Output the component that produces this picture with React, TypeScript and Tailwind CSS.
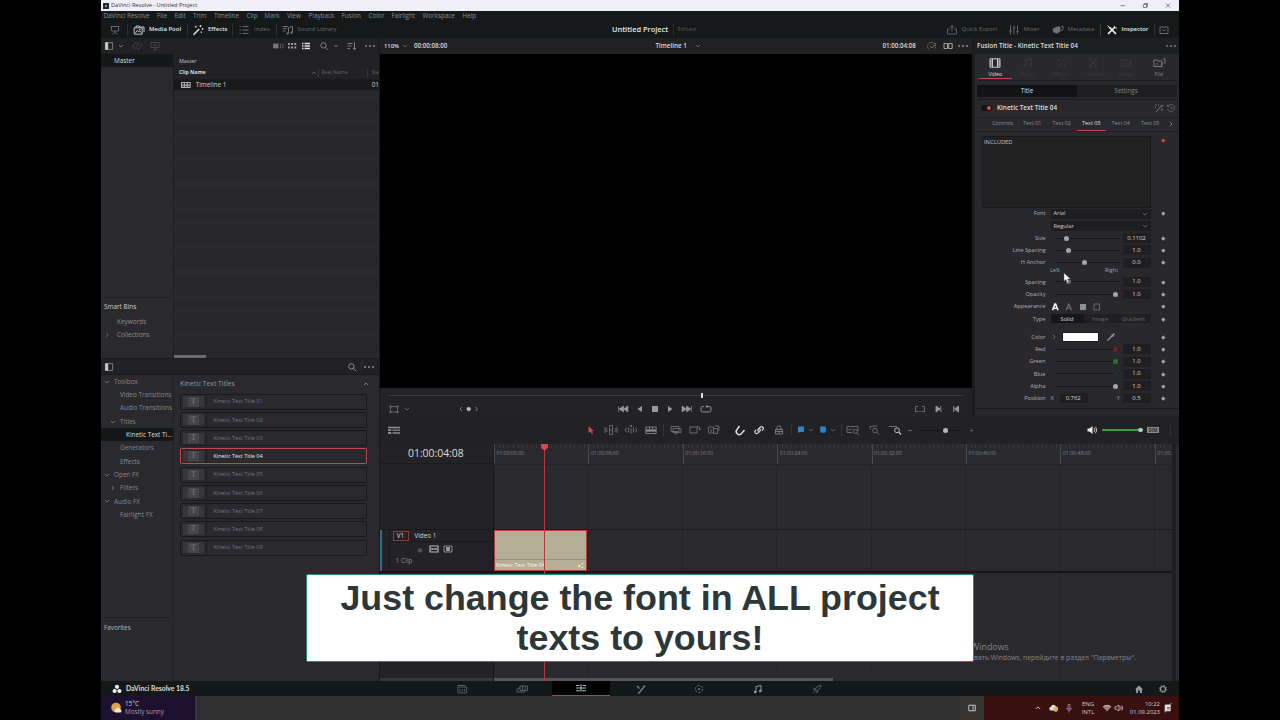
import React from "react";
import type { ReactNode } from "react";

type Kids = { children?: ReactNode; className?: string };

const Ic = ({ children, className = "" }: Kids) => (
  <svg
    viewBox="0 0 12 12"
    className={`h-[12px] w-[12px] shrink-0 overflow-visible ${className}`}
    fill="none"
    stroke="currentColor"
    strokeWidth="0.9"
  >
    {children}
  </svg>
);

const Chev = ({ className = "" }: Kids) => (
  <svg viewBox="0 0 6 6" className={`h-[6px] w-[6px] shrink-0 ${className}`} fill="none" stroke="currentColor" strokeWidth="0.8">
    <path d="M1 2l2 2 2-2" />
  </svg>
);

const Div = ({ className = "" }: Kids) => <div className={`h-[12px] w-px shrink-0 bg-[#2c2e31] ${className}`} />;

const Dots = ({ className = "" }: Kids) => (
  <Ic className={className}>
    <g fill="currentColor" stroke="none">
      <circle cx="2" cy="6" r="0.9" />
      <circle cx="6" cy="6" r="0.9" />
      <circle cx="10" cy="6" r="0.9" />
    </g>
  </Ic>
);

const PanelIcon = ({ className = "" }: Kids) => (
  <Ic className={className}>
    <path d="M2.4 2.6h7.2v6.8H2.4z" opacity="0.6" />
    <path d="M2.2 2.4h3v7.2h-3z" fill="currentColor" stroke="none" />
  </Ic>
);

const SearchIcon = ({ className = "" }: Kids) => (
  <Ic className={className}>
    <circle cx="5.4" cy="5.4" r="2.7" />
    <path d="M7.4 7.4L10 10" />
  </Ic>
);

const menus: [string, string][] = [
  ["DaVinci Resolve", "w-[53.5px]"],
  ["File", "w-[17.5px]"],
  ["Edit", "w-[18.5px]"],
  ["Trim", "w-[21px]"],
  ["Timeline", "w-[32.5px]"],
  ["Clip", "w-[18px]"],
  ["Mark", "w-[22.5px]"],
  ["View", "w-[21.5px]"],
  ["Playback", "w-[33px]"],
  ["Fusion", "w-[27px]"],
  ["Color", "w-[23px]"],
  ["Fairlight", "w-[31px]"],
  ["Workspace", "w-[40px]"],
  ["Help", "w-[20px]"],
];

function TitleBar() {
  return (
    <div className="flex h-[11px] shrink-0 items-center bg-[#f0eef7] text-[#303038]">
      <div className="ml-[2px] flex h-[6px] w-[6px] items-center justify-center bg-[#1b2b33]">
        <div className="h-[2px] w-[2px] rounded-full bg-[#9fb4bd]" />
      </div>
      <div className="ml-[2px] grow text-[5.6px]">DaVinci Resolve - Untitled Project</div>
      <svg viewBox="0 0 60 11" className="h-[11px] w-[60px]" fill="none" stroke="#55555c" strokeWidth="0.7">
        <path d="M1.500 5.700h4.500M24.500 4.500h3v3h-3zM25.500 4.300v-.8h3v3h-.8M47 3.500l4 4M51 3.500l-4 4" />
      </svg>
    </div>
  );
}

function MenuBar() {
  return (
    <div className="flex h-[10px] shrink-0 items-center bg-[#15191a] pl-[2.500px] text-[6.3px] text-[#8b8e90]">
      {menus.map(([t, w]) => (
        <div key={t} className={`${w} shrink-0`}>{t}</div>
      ))}
    </div>
  );
}

function MainToolbar() {
  return (
    <div className="flex h-[17px] shrink-0 items-center bg-[#15191a] text-[6px] text-[#696c6f]">
      <Ic className="ml-[7.5px]">
        <path d="M1.500 2.500h9M2.500 2.500v4.500h7V2.500M6 7v1.500M3.500 10.200L6 8.300l2.500 1.900" />
      </Ic>
      <Div className="ml-[6.500px]" />
      <Ic className="ml-[5px] text-[#d4d5d6]">
        <path d="M3 3.500V2h3l.8 1H11v5M1.200 3.800h8v6.400h-8zM2.500 8.800l1.800-2.400 1.500 1.500 1-.9 1.500 1.800" />
        <circle cx="6.800" cy="5.600" r=".5" />
      </Ic>
      <div className="ml-[4px] w-[38px] font-semibold text-[#e4e4e5]">Media Pool</div>
      <Div />
      <Ic className="ml-[4px] text-[#e4e4e5]">
        <path d="M1.500 10.800L7.200 5" strokeWidth="1.500" />
        <path d="M8.500 1v2.200M7.400 2.100h2.200M10.500 4v1.800M9.600 4.900h1.800M3.800 1.800v1.800M2.900 2.700h1.800M9.300 7.500v1.400M8.600 8.200H10" strokeWidth=".8" />
      </Ic>
      <div className="ml-[4px] w-[24px] font-semibold text-[#e4e4e5]">Effects</div>
      <Div />
      <Ic className="ml-[5px]">
        <path d="M4.500 2.500h6M4.500 6h6M4.500 9.500h6M1.500 2.500h1.300M1.500 6h1.300M1.500 9.500h1.300" strokeWidth="1.100" />
      </Ic>
      <div className="ml-[4px] w-[22px] tracking-[0.1px]">Index</div>
      <Div />
      <Ic className="ml-[5px] text-[#7a7c7e]">
        <path d="M.8 2.500h5M.8 4.800h4M.8 7.100h2.500M6.500 9.500v-6l4-1v6" />
        <circle cx="5.500" cy="9.500" r="1.100" fill="currentColor" stroke="none" />
        <circle cx="9.600" cy="8.700" r="1.100" fill="currentColor" stroke="none" />
      </Ic>
      <div className="ml-[3.500px] w-[314.500px]">Sound Library</div>
      <div className="w-[60.500px] text-[7.400px] font-semibold text-[#e8e8e9]">Untitled Project</div>
      <Div className="h-[8px]" />
      <div className="ml-[4px] grow text-[6px] tracking-[0.150px] text-[#55585b]">Edited</div>
      <Ic>
        <path d="M3.500 5H1.500v5h9V5h-2M6 7.500V1.800M4 3.500l2-2 2 2" />
      </Ic>
      <div className="ml-[3.500px] w-[47px]">Quick Export</div>
      <Ic className="-ml-[1px]">
        <path d="M2.500 1.500v9M6 1.500v9M9.500 1.500v9M1.300 7h2.400M4.800 4h2.400M8.300 7.500h2.400" />
      </Ic>
      <div className="ml-[4px] w-[28px]">Mixer</div>
      <Ic className="text-[#707376]">
        <path d="M1 5l4-2h3v4L5 9.200 1.500 8z" fill="currentColor" />
        <path d="M9 2.500l2-.5v3.500L9 7" />
      </Ic>
      <div className="ml-[4px] w-[32px]">Metadata</div>
      <Div className="bg-[#3a3d40]" />
      <Ic className="ml-[5px] text-[#efefef]">
        <path d="M2 10l7-7M3.200 3.200L10 10" strokeWidth="1.700" />
        <path d="M1.500 1.500l2 2M8 1.800l1 2 2 .3" />
      </Ic>
      <div className="ml-[4px] w-[32px] text-[5.900px] font-semibold text-[#e8e8e9]">Inspector</div>
      <Div />
      <Ic className="mr-[9px] ml-[3.500px] text-[#6d7073]">
        <path d="M2 3h8v6.500H2zM4.300 5.300L6 7l1.700-1.700" />
      </Ic>
    </div>
  );
}

function MediaPool() {
  return (
    <div className="flex h-[304px] shrink-0 text-[6.400px]">
      <div className="flex w-[73px] shrink-0 flex-col border-r border-[#1d1d20] bg-[#29292e]">
        <div className="flex h-[13px] items-center bg-[#151819] pl-[13px] text-[#dcdcdc]">Master</div>
        <div className="mx-[3px] h-[231px] border-b border-[#1f1f22]" />
        <div className="flex h-[17px] items-center pl-[3px] text-[#d0d0d2]">Smart Bins</div>
        <div className="flex h-[13.500px] items-center pl-[16px] text-[#8e8e93]">Keywords</div>
        <div className="flex h-[13px] items-center pl-[3px] text-[#8e8e93]">
          <Chev className="-rotate-90 text-[#6a6a6f]" />
          <span className="ml-[7px]">Collections</span>
        </div>
      </div>
      <div className="flex grow flex-col overflow-hidden bg-[#27272c]">
        <div className="flex h-[13.500px] shrink-0 items-center bg-[#222226] pl-[5px] text-[5.400px] text-[#c4c4c6]">Master</div>
        <div className="flex h-[12px] shrink-0 items-center border-b border-[#1c1c1f] bg-[#222226] pl-[5px] text-[5.200px] text-[#66666b]">
          <span className="w-[132px] font-bold text-[#dededf]">Clip Name</span>
          <Chev className="rotate-180" />
          <span className="ml-[1px] w-[50px] border-l border-[#3a3a3e] pl-[3px]">Reel Name</span>
          <span className="border-l border-[#3a3a3e] pl-[3px]">Sta</span>
        </div>
        <div className="flex h-[10px] shrink-0 items-center bg-[#19191c] text-[#cfcfd0]">
          <svg viewBox="0 0 10 6" className="ml-[7px] h-[6px] w-[10px]" fill="#b0b0b2">
            <path d="M0 0h10v6H0zM1 1v1.500h2V1zM4 1v1.500h2V1zM7 1v1.500h2V1zM1 3.800v1h2v-1zM4 3.800v1h2v-1zM7 3.800v1h2v-1z" fillRule="evenodd" />
          </svg>
          <span className="ml-[5px] w-[176px] shrink-0">Timeline 1</span>
          <span>01</span>
        </div>
        <div className="mr-[2px] grow bg-[repeating-linear-gradient(180deg,#28282d_0_11px,#26262b_11px_22px)]" />
        <div className="h-[3px] w-[32px] shrink-0 bg-[#6b6b70]" />
      </div>
    </div>
  );
}

const tree: { t: string; pad: string; open?: boolean; shut?: boolean; sel?: boolean }[] = [
  { t: "Toolbox", pad: "pl-[3px]", open: true },
  { t: "Video Transitions", pad: "pl-[19px]" },
  { t: "Audio Transitions", pad: "pl-[19px]" },
  { t: "Titles", pad: "pl-[9px]", open: true },
  { t: "Kinetic Text Ti...", pad: "pl-[25px]", sel: true },
  { t: "Generators", pad: "pl-[19px]" },
  { t: "Effects", pad: "pl-[19px]" },
  { t: "Open FX", pad: "pl-[3px]", open: true },
  { t: "Filters", pad: "pl-[9px]", shut: true },
  { t: "Audio FX", pad: "pl-[3px]", open: true },
  { t: "Fairlight FX", pad: "pl-[19px]" },
];

const titles = ["01", "02", "03", "04", "05", "06", "07", "08", "09"];

function EffectsPanel() {
  return (
    <>
      <div className="flex h-[17px] shrink-0 items-center border-y border-[#1a1a1d] bg-[#212125] text-[#9b9b9e]">
        <PanelIcon className="ml-[2px] text-[#c8c8ca]" />
        <Div className="ml-[3px] bg-[#1a1a1d]" />
        <SearchIcon className="ml-[226.500px]" />
        <Div className="ml-[3.500px] bg-[#1a1a1d]" />
        <Dots className="ml-[1px]" />
      </div>
      <div className="flex min-h-0 grow">
        <div className="flex w-[73px] shrink-0 flex-col border-r border-[#222226] text-[6.400px] text-[#88888d]">
          {tree.map((r) => (
            <div
              key={r.t}
              className={`flex h-[13.300px] shrink-0 items-center overflow-hidden ${r.pad} ${r.sel ? "bg-[#141718] text-[#dedede]" : ""}`}
            >
              {r.open && <Chev className="mr-[4px]" />}
              {r.shut && <Chev className="mr-[4px] -rotate-90" />}
              {r.t}
            </div>
          ))}
          <div className="mx-[3px] mt-auto border-t border-[#202024]" />
          <div className="flex h-[63px] pt-[5px] pl-[3px] text-[6.300px] text-[#b9b9bc]">Favorites</div>
        </div>
        <div className="flex grow flex-col">
          <div className="flex h-[18.500px] items-center justify-between pr-[10px] pl-[6px] text-[6.750px] text-[#97979b]">
            Kinetic Text Titles
            <Chev className="rotate-180" />
          </div>
          <div className="flex flex-col gap-[2.250px] pl-[6px]">
            {titles.map((n) => (
              <div
                key={n}
                className={`flex h-[16px] w-[187px] items-center rounded-[1.500px] border text-[5.450px] ${
                  n === "04" ? "border-[#c1474a] text-[#ececec]" : "border-[#19191c] text-[#77777c]"
                }`}
              >
                <div className="ml-[2px] flex h-[11px] w-[21px] items-center justify-center bg-[#36363b]">
                  <div className="flex h-[10px] w-[11px] items-center justify-center bg-[#45454a] font-['Liberation_Serif'] text-[8px] leading-none text-[#7b7b80]">T</div>
                </div>
                <div className="ml-[2px] h-full w-px bg-[#1c1c1f]" />
                <span className="ml-[6.500px]">Kinetic Text Title {n}</span>
              </div>
            ))}
          </div>
        </div>
      </div>
    </>
  );
}

function LeftColumn() {
  return (
    <div className="flex w-[279px] shrink-0 flex-col border-r border-[#18181a] bg-[#29292e]">
      <div className="flex h-[16px] shrink-0 items-center bg-[#212124] text-[#8b8b8e]">
        <PanelIcon className="ml-[2px] text-[#c8c8ca]" />
        <Chev className="ml-[2.500px]" />
        <Ic className="ml-[7.500px] text-[#4b4b4f]">
          <path d="M2 8.500C1 5 4 2 6.500 3M10 3.500c1 3.500-2 6.500-4.500 5.500M3.500 9.500l5-7" />
        </Ic>
        <Ic className="ml-[6px] text-[#4b4b4f]">
          <path d="M2 2.500h8v5H2zM6 7.500v3M4 5h4M4.500 9L6 10.500 7.500 9" />
        </Ic>
        <Ic className="ml-[111px] text-[#77777b]">
          <path d="M1.500 4h4.500v4H1.500z" fill="currentColor" />
          <path d="M7.500 4h1v4h-1M10 4h1v4h-1" strokeWidth=".6" />
        </Ic>
        <Ic className="ml-[2px] text-[#a5a5a8]">
          <path d="M2 4h1.800M5.200 4H7M8.400 4h1.800M2 7.500h1.800M5.200 7.500H7M8.400 7.500h1.800" strokeWidth="1.800" />
        </Ic>
        <Ic className="ml-[2px] text-[#e0e0e1]">
          <path d="M2 3.500h1.500M4.500 3.500H10M2 6h1.500M4.500 6H10M2 8.500h1.500M4.500 8.500H10" strokeWidth="1.300" />
        </Ic>
        <SearchIcon className="ml-[6px]" />
        <Chev className="ml-[3px]" />
        <Ic className="ml-[6.500px]">
          <path d="M1.500 3.500h5M1.500 6h3.800M1.500 8.500h2.600M8.500 2.500v7M7 8l1.500 1.500L10 8" />
        </Ic>
        <Dots className="ml-[6px]" />
      </div>
      <MediaPool />
      <EffectsPanel />
    </div>
  );
}

function Viewer() {
  return (
    <div className="flex grow flex-col bg-[#232327]">
      <div className="flex h-[16px] shrink-0 items-center bg-[#212124] text-[6.200px] font-semibold text-[#d9d9da]">
        <div className="ml-[4px] w-[18px] text-[5.800px]">110%</div>
        <Chev className="text-[#77777a]" />
        <div className="ml-[6px] w-[241.500px]">00:00:08:00</div>
        <div className="w-[39px] text-[6.300px]">Timeline 1</div>
        <Chev className="text-[#77777a]" />
        <div className="ml-[182px] w-[43.500px]">01:00:04:08</div>
        <Ic className="text-[#a08550]">
          <path d="M3 9.500a4 4 0 1 1 6-1" strokeDasharray="1.500 .8" />
          <path d="M4 6l2 2 4-5" stroke="#77777a" />
        </Ic>
        <Ic className="ml-[4px] text-[#b4b4b6]">
          <path d="M2 3.500h3.500v5H2zM6.700 3.500h3.500v5H6.700z" />
        </Ic>
        <Dots className="ml-[3px] text-[#97979a]" />
      </div>
      <div className="h-[333.500px] shrink-0 bg-black" />
      <div className="flex h-[16px] shrink-0 items-center px-[8px]">
        <div className="h-px w-[312.500px] bg-[#3a3a3d]" />
        <div className="h-[5px] w-[2px] bg-[#dedede]" />
        <div className="h-px grow bg-[#3a3a3d]" />
      </div>
      <div className="flex h-[11px] shrink-0 items-center text-[#98989b]">
        <Ic className="ml-[8px] text-[#68686c]">
          <path d="M2.500 3.500h7v5.500h-7z" />
          <path d="M1.500 2.500h2v2h-2zM8.500 2.500h2v2h-2zM1.500 8h2v2h-2zM8.500 8h2v2h-2z" fill="currentColor" stroke="none" />
        </Ic>
        <Chev className="ml-[4px] text-[#77777a]" />
        <svg viewBox="0 0 19 12" className="ml-[49px] h-[12px] w-[19px]" fill="none" stroke="currentColor" strokeWidth=".8">
          <path d="M3 4L1 6l2 2M16.500 4l2 2-2 2" />
          <circle cx="9.700" cy="6" r="2.100" fill="#bcbcbe" stroke="none" />
        </svg>
        <Ic className="ml-[139px]">
          <path d="M1.500 3v6M6.500 3v6L2 6zM11 3v6L6.500 6z" fill="currentColor" strokeWidth=".6" />
        </Ic>
        <Ic className="ml-[5px]">
          <path d="M8 3v6L3.500 6z" fill="currentColor" stroke="none" />
        </Ic>
        <Ic className="ml-[3px]">
          <path d="M3 3h6v6H3z" fill="currentColor" stroke="none" />
        </Ic>
        <Ic className="ml-[3px]">
          <path d="M4 3v6l4.500-3z" fill="currentColor" stroke="none" />
        </Ic>
        <Ic className="ml-[4.500px]">
          <path d="M10.500 3v6M5.500 3v6L10 6zM1 3v6l4.500-3z" fill="currentColor" strokeWidth=".6" />
        </Ic>
        <Ic className="ml-[7px]">
          <path d="M4 3.500H2.500a1.500 1.500 0 0 0-1.500 1.500v2a2 2 0 0 0 2 2h6a2 2 0 0 0 2-2V5a1.500 1.500 0 0 0-1.500-1.500H6M7.500 2L6 3.500 7.500 5" />
        </Ic>
        <Ic className="ml-[202.500px] text-[#77777a]">
          <path d="M4 3.500H1.500V8.500H4M8 3.500h2.500V8.500H8M4.500 8.500h1M6.500 8.500h1" />
        </Ic>
        <Ic className="ml-[6px]">
          <path d="M4 3v6l4-3zM8.800 3v6" fill="currentColor" />
        </Ic>
        <Ic className="ml-[6px]">
          <path d="M8.500 3v6l-4-3zM3.700 3v6" fill="currentColor" />
        </Ic>
      </div>
      <div className="grow" />
    </div>
  );
}

const Diamond = ({ className = "bg-[#a5a5a8]" }: { className?: string }) => (
  <div className={`h-[2.600px] w-[2.600px] shrink-0 rotate-45 ${className}`} />
);

const Val = ({ children }: Kids) => (
  <div className="flex h-[10px] w-[28px] items-center justify-center bg-[#1f1f22] pr-px text-[5.900px] text-[#d6d6d7]">{children}</div>
);

function Row({ label, children, h = "h-[12.250px]", noKey }: { label: string; children?: ReactNode; h?: string; noKey?: boolean }) {
  return (
    <div className={`flex ${h} shrink-0 items-center`}>
      <div className="w-[70.500px] shrink-0 text-right text-[5.700px] text-[#b0b0b4]">{label}</div>
      <div className="ml-[5px] flex w-[100.500px] shrink-0 items-center justify-between">{children}</div>
      {!noKey && (
        <div className="ml-[10.500px]">
          <Diamond />
        </div>
      )}
    </div>
  );
}

const Slider = ({ left, knob }: { left: string; knob: string }) => (
  <div className="ml-[4px] flex w-[65px] items-center">
    <div className={`h-px shrink-0 bg-[#17171a] ${left}`} />
    <div className={`h-[5px] w-[5px] shrink-0 rounded-full ${knob}`} />
    <div className="h-px grow bg-[#17171a]" />
  </div>
);

const Drop = ({ children }: Kids) => (
  <div className="flex h-[10px] w-full items-center justify-between bg-[#1e1e21] px-[3px] text-[5.700px] text-[#cdcdcf]">
    {children}
    <Chev className="text-[#77777a]" />
  </div>
);

const tabs: { t: string; on?: boolean; dim?: boolean; d: ReactNode }[] = [
  { t: "Video", on: true, d: <path d="M1 1.800h10v8.400H1zM3.500 1.800v8.400M8.500 1.800v8.400M1 4h2M1 6h2M1 8h2M9 4h2M9 6h2M9 8h2" /> },
  { t: "Audio", dim: true, d: <path d="M4 9.500V3l5.500-1v6.500M4 9.500a1.200 1.200 0 1 1-.1-1M9.500 8.500a1.200 1.200 0 1 1-.1-1" /> },
  { t: "Effects", dim: true, d: <path d="M2 10.500L7.500 5M9 2v2M8 3h2M4 2v2M3 3h2M9.500 7v2" /> },
  { t: "Transition", dim: true, d: <path d="M2 2h8L2 10h8z" /> },
  { t: "Image", dim: true, d: <path d="M1.500 3h9v6.500h-9zM3 8l2-2.500 2 2 1-1 1.500 1.500" /> },
  { t: "File", d: <path d="M1 3h3l1 1h4v5.500H1zM9.500 2H12v5M3 7h2M8 8.500l1.500-3" /> },
];

function Inspector() {
  return (
    <div className="flex w-[207px] shrink-0 flex-col border-l-[3px] border-[#1b1b1d] bg-[#28282d]">
      <div className="flex h-[16px] shrink-0 items-center justify-between bg-[#1d2022] pr-[2px] pl-[2px] text-[6.400px] font-semibold text-[#dedede]">
        Fusion Title - Kinetic Text Title 04
        <Dots className="text-[#85858a]" />
      </div>
      <div className="mx-[4px] grid h-[26.500px] shrink-0 grid-cols-6 border-b border-[#1c1c1f]">
        {tabs.map((t) => (
          <div
            key={t.t}
            className={`flex h-[25px] flex-col items-center border-b pt-[3px] text-[5.300px] leading-[10px] ${
              t.on ? "border-[#c34a4c] text-[#dcdcdc]" : t.dim ? "border-transparent text-[#3a3a3f]" : "border-transparent text-[#838388]"
            }`}
          >
            <Ic>{t.d}</Ic>
            {t.t}
          </div>
        ))}
      </div>
      <div className="mx-[2px] mt-[4px] grid h-[12px] shrink-0 grid-cols-2 rounded-[2px] bg-[#1e1e21] text-[6.300px]">
        <div className="flex items-center justify-center bg-[#131315] text-[#dedede]">Title</div>
        <div className="flex items-center justify-center pr-[2px] text-[#85858a]">Settings</div>
      </div>
      <div className="mx-[2px] mt-[2.500px] flex h-[16px] shrink-0 items-center border-t border-[#1c1c1f]">
        <div className="ml-[4px] flex h-[6px] w-[11px] items-center justify-end rounded-full bg-[#1a1416] pr-[1px]">
          <div className="h-[4px] w-[4px] rounded-full bg-[#d8484c]" />
        </div>
        <div className="ml-[5px] grow text-[6.400px] font-semibold text-[#dedede]">Kinetic Text Title 04</div>
        <Ic className="text-[#808085]">
          <path d="M3 10l6-7M9 6v3M2 3h1.500M5 3h1M2 5.500h1M8.500 5l1.500-2" />
        </Ic>
        <Ic className="text-[#606065]">
          <path d="M3 4a3.500 3.500 0 1 1-.5 3M2.500 2.500V4.500h2M6 4.500V6.500H7.500" />
        </Ic>
      </div>
      <div className="mt-[1.500px] ml-[2px] flex h-[15px] shrink-0 items-center border-y border-[#1e1e21] pl-[11px] text-[5.400px] text-[#909095]">
        {["Controls", "Text 01", "Text 02", "Text 03", "Text 04", "Text 05"].map((t) => (
          <div
            key={t}
            className={`flex h-[14px] w-[29.500px] shrink-0 items-center justify-center border-b ${
              t === "Text 03" ? "border-[#c34a4c] text-[#e0e0e0]" : "border-transparent"
            }`}
          >
            {t}
          </div>
        ))}
        <Chev className="ml-[3px] -rotate-90" />
      </div>
      <div className="mt-[4px] flex h-[72px] shrink-0 pl-[7px]">
        <div className="w-[169px] border border-[#19191c] bg-[#212122] px-[1px] pt-px text-[5.800px] leading-[8px] text-[#c2c2c4]">INCLUDED</div>
        <div className="mt-[3.500px] ml-[10.500px]">
          <Diamond className="bg-[#d2454a]" />
        </div>
      </div>
      <Row label="Font"><Drop>Arial</Drop></Row>
      <Row label="" noKey><Drop>Regular</Drop></Row>
      <Row label="Size"><Slider left="w-[9px]" knob="bg-[#a5a5a8]" /><Val>0.1102</Val></Row>
      <Row label="Line Spacing"><Slider left="w-[11px]" knob="bg-[#a5a5a8]" /><Val>1.0</Val></Row>
      <Row label="H Anchor"><Slider left="w-[27px]" knob="bg-[#a5a5a8]" /><Val>0.0</Val></Row>
      <div className="flex h-[7px] shrink-0 items-start pl-[75px] text-[5.500px] leading-[3px] text-[#a5a5a9]">
        <span className="w-[55px]">Left</span>
        <span>Right</span>
      </div>
      <Row label="Spacing"><Slider left="w-[11px]" knob="bg-[#6a6a6e]" /><Val>1.0</Val></Row>
      <Row label="Opacity"><Slider left="w-[58px]" knob="bg-[#a5a5a8]" /><Val>1.0</Val></Row>
      <Row label="Appearance" h="h-[12.500px]">
        <svg viewBox="0 0 54 10" className="h-[10px] w-[54px]" fill="none">
          <path d="M1.500 8.200L3.900 2h.7L7 8.200M2.300 6.200h3.900" stroke="#f2f2f2" strokeWidth="1.600" />
          <path d="M15 8.200L17.500 2.200h.6L20.500 8.200M16.300 6.200h3" stroke="#66666a" strokeWidth="1.200" />
          <path d="M29 2h6v6h-6z" fill="#8f8f93" />
          <path d="M43 2h5.500v6H43z" stroke="#6f6f73" strokeWidth=".9" />
        </svg>
      </Row>
      <Row label="Type">
        <div className="flex h-[9px] w-full items-center rounded-[1px] bg-[#202023] text-[5.700px] text-[#67676b]">
          <div className="flex h-full w-[33px] items-center justify-center bg-[#171719] text-[#dedede]">Solid</div>
          <div className="w-[33px] text-center">Image</div>
          <div className="w-[34px] text-center">Gradient</div>
        </div>
      </Row>
      <div className="h-[6px] shrink-0" />
      <Row label="Color">
        <div className="flex items-center">
          <Chev className="-rotate-90 text-[#77777a]" />
          <div className="ml-[5.500px] h-[9.500px] w-[36.500px] border border-[#1a1a1c] bg-white" />
          <Ic className="ml-[6px] text-[#9a9a9d]">
            <path d="M2.500 9.500l4.500-4.500M6.500 3.500l2 2M7.500 4.500l2-2" strokeWidth="1.300" />
          </Ic>
        </div>
      </Row>
      <Row label="Red"><Slider left="w-[58px]" knob="bg-[#7a1c1d]" /><Val>1.0</Val></Row>
      <Row label="Green"><Slider left="w-[58px]" knob="bg-[#1f7a2b]" /><Val>1.0</Val></Row>
      <Row label="Blue"><Slider left="w-[58px]" knob="bg-[#1d2c44]" /><Val>1.0</Val></Row>
      <Row label="Alpha"><Slider left="w-[58px]" knob="bg-[#a5a5a8]" /><Val>1.0</Val></Row>
      <Row label="Position">
        <span className="w-[6px] text-[5.500px] text-[#a5a5a9]">X</span>
        <Val>0.762</Val>
        <span className="ml-[26px] text-[5.500px] text-[#a5a5a9]">Y</span>
        <Val>0.5</Val>
      </Row>
      <div className="mt-[3px] h-[12px] border-t border-[#1c1c1f]" />
    </div>
  );
}

function TimelineToolbar() {
  return (
    <div className="flex h-[28px] shrink-0 items-center bg-[#222226] text-[#707074]">
      <Ic className="ml-[8px] text-[#8b8b8e]">
        <path d="M0 3.500h12M4.500 6.200H12M4.500 9H12" strokeWidth="1.300" />
        <path d="M0 6.200h3.300M0 9h3.300" strokeWidth="1.800" />
      </Ic>
      <Ic className="ml-[184.500px] text-[#d4453f]">
        <path d="M3.500 2l5.500 5.200H6.800l1.200 2.600-1.200.5-1.200-2.600L3.500 9z" fill="currentColor" stroke="none" />
      </Ic>
      <Ic className="ml-[8.500px]">
        <path d="M4.500 1.500h3v9h-3zM4.500 6h3M2.500 4L.8 6l1.700 2M9.500 4l1.700 2-1.700 2M0 3v6M12 3v6" />
      </Ic>
      <Ic className="ml-[8px]">
        <path d="M6 4v6M5 1.500h2L6 3zM3.500 3.500v5M8.500 3.500v5M1.500 3.500L.2 6l1.300 2.500M10.500 3.500L11.800 6l-1.300 2.500" />
      </Ic>
      <Ic className="ml-[7.500px] text-[#85858a]">
        <path d="M.8 3h10.400v6.500H.8z" />
        <path d="M1 6.500h10" strokeWidth="2.400" />
        <path d="M4.500 3v2M7.500 3v2" />
      </Ic>
      <Div className="ml-[6.500px] bg-[#343438]" />
      <Ic className="ml-[5.500px]">
        <path d="M1 2.500h8v5H1zM3 4.500h8v4H3zM5 9l1 1.500L7.500 9" />
      </Ic>
      <Ic className="ml-[7.500px]">
        <path d="M1 3h7v6H1zM8 2.500c2-.5 3 .5 2.500 3M9 4.500l1.500 1.500L12 4.500" />
      </Ic>
      <Ic className="ml-[6.500px]">
        <path d="M.5 3h5v6h-5zM5.500 4.500h4v5h-4zM7 2h4v5M3 5v3" />
      </Ic>
      <Ic className="ml-[14.500px] text-[#e2e2e3]">
        <path d="M5.500 2L3 5.500a3 3 0 0 0 4.500 4L10.500 6" strokeWidth="1.500" />
      </Ic>
      <Ic className="ml-[7px] text-[#dcdcdd]">
        <path d="M5.500 7.500a1.800 1.800 0 0 1 0-2.500l2-2a1.800 1.800 0 0 1 2.500 2.500L9 6.500M6.700 4.800a1.800 1.800 0 0 1 0 2.500l-2 2A1.800 1.800 0 0 1 2.200 6.800l1-1" strokeWidth="1.200" />
      </Ic>
      <Ic className="ml-[7.500px] text-[#828286]">
        <path d="M2.500 5.500h7v4.500h-7zM4 5.500V3.800a2 2 0 0 1 4 0v1.700M2.500 7.500h7M6 7v2" />
      </Ic>
      <Div className="ml-[6.500px] bg-[#343438]" />
      <Ic className="ml-[3px] text-[#2e86c8]">
        <path d="M3 2.500h6v6L8 8H5L3 9z" fill="currentColor" stroke="none" />
      </Ic>
      <Chev className="ml-[1px]" />
      <Ic className="ml-[2.500px] text-[#2e86c8]">
        <path d="M3.200 2.500h5.600v5L8 8.800H4L3.200 7.500z" fill="currentColor" stroke="none" />
      </Ic>
      <Chev className="ml-[1px]" />
      <Div className="ml-[5.500px] bg-[#343438]" />
      <Ic className="ml-[5px]">
        <path d="M0 2.500h11v5M0 2.500v6h5M2 4.500v2M4 4.500v2M6 4.500v1" />
        <circle cx="8.500" cy="7.500" r="1.900" />
        <path d="M10 9l2 2" />
      </Ic>
      <Ic className="ml-[10px]">
        <path d="M1 2.500h3M1 2.500v3M4 2h4" />
        <circle cx="6" cy="6.500" r="2.300" />
        <path d="M7.800 8.300L10 10.500" />
      </Ic>
      <Ic className="ml-[8.500px] text-[#c9c9cb]">
        <path d="M-1.500 2.500h8.500" opacity=".5" />
        <circle cx="7" cy="6.300" r="2.400" />
        <path d="M8.800 8.200L11 10.500" strokeWidth="1.300" />
      </Ic>
      <div className="ml-[5px] flex w-[6px] justify-center"><div className="h-px w-[4px] bg-[#66666a]" /></div>
      <div className="ml-[7px] flex w-[42px] items-center">
        <div className="h-px w-[23px] bg-[#18181b]" />
        <div className="h-[5px] w-[5px] rounded-full bg-[#b4b4b6]" />
        <div className="h-px grow bg-[#18181b]" />
      </div>
      <div className="ml-[7px] flex w-[6px] justify-center text-[8px] leading-none">+</div>
      <Ic className="ml-[111px] text-[#ececec]">
        <path d="M1.500 4.500h2L6.500 2v8L3.500 7.500h-2z" fill="currentColor" stroke="none" />
        <path d="M7.800 4a2.500 2.500 0 0 1 0 4M9.200 2.800a4.300 4.300 0 0 1 0 6.400" strokeWidth=".8" />
      </Ic>
      <div className="ml-[4px] flex w-[41px] items-center">
        <div className="h-[1.500px] grow bg-[#3e9a45]" />
        <div className="h-[4.500px] w-[4.500px] rounded-full bg-[#b9c4b9]" />
      </div>
      <div className="ml-[4.500px] flex h-[6px] w-[12px] items-center justify-center bg-[#8b8b8e] text-[4.500px] leading-none font-bold text-[#29292d]">DIM</div>
      <Div className="ml-[11px] bg-[#303034]" />
    </div>
  );
}

const marks = ["00:00", "08:00", "16:00", "24:00", "32:00", "40:00", "48:00", "56:00"];

function Timeline() {
  return (
    <div className="relative flex min-h-0 grow bg-[#29292e]">
      <div className="flex w-[114px] shrink-0 flex-col border-r border-[#19191c] bg-[#232327]">
        <div className="flex h-[20px] shrink-0 items-center border-b border-[#1b1b1e] pl-[28px] text-[10.400px] text-[#dcdcdd]">01:00:04:08</div>
        <div className="h-[66px] shrink-0 border-b border-[#1a1a1c]" />
        <div className="flex h-[41px] shrink-0 border-l-2 border-[#2f6f8c] text-[6.300px]">
          <div className="w-[8px] border-r border-[#1b1b1e]" />
          <div className="flex grow flex-col">
            <div className="flex h-[12px] items-center border-b border-[#1b1b1e]">
              <div className="ml-[2.500px] flex h-[10px] w-[16px] items-center justify-center border border-[#94393c] text-[6.300px] text-[#dededf]">V1</div>
              <span className="ml-[6px] text-[#d6d6d8]">Video 1</span>
            </div>
            <div className="flex h-[14px] items-center pl-[25px]">
              <Ic className="mr-[1.500px] -ml-[1px] scale-75 text-[#505055]">
                <path d="M3.500 6h5v4h-5zM4.500 6V4" fill="currentColor" />
              </Ic>
              <Ic className="mr-[2px] text-[#bababc]">
                <path d="M2 3h8v6H2zM4 5v2M8 5v2M3.500 6h5" strokeWidth="1.200" />
              </Ic>
              <Ic className="text-[#97979a]">
                <path d="M2 3h8v6H2z" />
                <path d="M4 4h4v4H4z" fill="currentColor" stroke="none" />
              </Ic>
            </div>
            <div className="pl-[5.500px] text-[6.500px] leading-[10px] text-[#8b8b8f]">1 Clip</div>
          </div>
        </div>
        <div className="grow border-t-2 border-[#161618]" />
        <div className="h-[3px] shrink-0 bg-[#37373b]" />
      </div>
      <div className="flex grow flex-col overflow-hidden">
        <div className="flex h-[21px] shrink-0 overflow-hidden border-b border-[#232327] text-[5.200px] text-[#838387]">
          {marks.map((m) => (
            <div key={m} className="flex h-full w-[94.400px] shrink-0 flex-col border-l border-[#4a4a4e]">
              <div className="h-[4px] shrink-0 bg-[repeating-linear-gradient(90deg,transparent_0_3.720px,#38383c_3.720px_4.720px)]" />
              <div className="pt-[1.500px] pl-[1.500px]">01:00:{m}</div>
            </div>
          ))}
        </div>
        <div className="flex h-[65px] shrink-0 border-b border-[#1b1b1e] bg-[repeating-linear-gradient(90deg,transparent_0_93.400px,#242428_93.400px_94.400px)]" />
        <div className="flex h-[41px] shrink-0 bg-[repeating-linear-gradient(90deg,transparent_0_93.400px,#242428_93.400px_94.400px)]">
          <div className="flex w-[93px] flex-col border-[1.500px] border-[#b2403f] bg-[#b4ae94]">
            <div className="grow border-b border-[#969078]" />
            <div className="flex h-[10px] items-center justify-between pr-[2px] pl-px text-[5.450px] text-[#fbfaf2]">
              <span>Kinetic Text Title 04</span>
              <svg viewBox="0 0 8 8" className="h-[7px] w-[7px]" fill="#fff">
                <path d="M2.500 2.500l.6 1.400 1.400.6-1.400.6-.6 1.400-.6-1.400L.5 4.500l1.400-.6zM6 .8l.4.900.9.400-.9.400L6 3.400l-.4-.9-.9-.4.900-.4zM6 5l.4.800.8.400-.8.400L6 7.400l-.4-.8-.8-.4.800-.4z" />
              </svg>
            </div>
          </div>
        </div>
        <div className="h-[2px] shrink-0 border-y border-[#161618]" />
        <div className="grow bg-[repeating-linear-gradient(90deg,transparent_0_93.400px,#262629_93.400px_94.400px)] pt-[68px] pl-[480px] text-[#85858a]">
          <div className="-ml-[3px] text-[8.900px] leading-[12px]">Windows</div>
          <div className="text-[6.800px] leading-[10px]">вать Windows, перейдите в раздел &quot;Параметры&quot;.</div>
        </div>
        <div className="h-[3px] w-[339px] shrink-0 bg-[#55555a]" />
      </div>
      <div className="w-[4px] shrink-0 bg-[#1f1f22]" />
      <div className="w-[3px] shrink-0 bg-[#29292e]" />
      <div className="absolute top-0 left-[161px] flex h-full w-[7px] flex-col items-center">
        <svg viewBox="0 0 7 7" className="h-[7px] w-[7px] shrink-0" fill="#d8474a">
          <path d="M0 0h7v3.500L3.500 7 0 3.500z" />
        </svg>
        <div className="w-[1.500px] grow bg-[#b53a3b]" />
      </div>
    </div>
  );
}

function PageBar() {
  return (
    <div className="flex h-[15px] shrink-0 items-center bg-[#151819] text-[#5f6366]">
      <svg viewBox="0 0 10 10" className="ml-[11px] h-[10px] w-[10px]" fill="#f2f2f2">
        <circle cx="5" cy="2.800" r="2.100" />
        <circle cx="2.600" cy="7" r="2.100" />
        <circle cx="7.400" cy="7" r="2.100" />
      </svg>
      <div className="ml-[4px] w-[330px] font-[Lato] text-[6.800px] font-bold text-[#dedede]">DaVinci Resolve 18.5</div>
      <Ic>
        <path d="M2 4h8.500v6H2zM1.500 2.500h8M4 6v2.500M6.300 6v2.500M8.500 6v2.500" />
      </Ic>
      <Ic className="ml-[48px]">
        <path d="M4 3h7.500v4.500H4zM.8 6.500L4 4.500M1 6.500v2.500h8V7.500M6.500 3v4.500M9 3v4.500" />
      </Ic>
      <div className="ml-[24px] flex h-full w-[58px] items-center justify-center border-b border-[#b24244] bg-black text-[#a9b7c4]">
        <Ic>
          <path d="M1 3.500h3.500M7.500 3.500H11M1 6h10M1 8.700h4M7 8.700h4M6 2.500v7" strokeWidth="1.100" />
        </Ic>
      </div>
      <Ic className="ml-[25px] text-[#808386]">
        <path d="M2 3l2.500 2.500M4 10l6-7.500M3 10.500l2-1.500" strokeWidth="1.300" />
      </Ic>
      <Ic className="ml-[45.500px] text-[#777a7d]">
        <circle cx="6" cy="6" r="3.600" strokeDasharray="2.400 1.300" />
        <circle cx="6" cy="6" r="1" fill="currentColor" stroke="none" />
      </Ic>
      <Ic className="ml-[47px] text-[#a3a6a8]">
        <path d="M4 9V3.500l5-1V8" />
        <circle cx="3.200" cy="9" r="1.200" fill="currentColor" stroke="none" />
        <circle cx="8.200" cy="8" r="1.200" fill="currentColor" stroke="none" />
      </Ic>
      <Ic className="ml-[47px]">
        <path d="M10 2C6.500 2.500 4.500 5 4 7.500l.8.800C7.500 7.500 9.500 5.500 10 2zM4.500 5L2.500 6l1.500.8M7 7.800L6 9.800 5.300 8.500M3.500 8.500L2 10" />
      </Ic>
      <div className="grow" />
      <Ic className="text-[#97999b]">
        <path d="M2 6.200L6 2.500l4 3.700H9V10H7V7.500H5V10H3V6.200z" fill="currentColor" stroke="none" />
      </Ic>
      <Ic className="mr-[10px] ml-[12px] text-[#97999b]">
        <circle cx="6" cy="6" r="2.500" strokeWidth="1.100" />
        <circle cx="6" cy="6" r="3.600" strokeWidth="1" strokeDasharray="1.300 1.530" />
      </Ic>
    </div>
  );
}

function Taskbar() {
  return (
    <div className="flex h-[24px] shrink-0 bg-[#303030] text-[6.300px] leading-[8px] text-[#d6cdd9]">
      <div className="flex w-[96px] items-center border-r-2 border-[#3a3540] bg-[#1c1230]">
        <svg viewBox="0 0 12 12" className="ml-[9px] h-[12px] w-[12px]">
          <circle cx="6" cy="5.500" r="4.800" fill="#e2a04c" />
          <path d="M5.500 10.500a2 2 0 0 1 .3-3.500 2.400 2.400 0 0 1 4.400.3 1.700 1.700 0 0 1 .3 3.200z" fill="#efe6df" />
        </svg>
        <div className="ml-[3px]">
          <div>15°C</div>
          <div className="text-[#a597b5]">Mostly sunny</div>
        </div>
      </div>
      <div className="flex grow items-center justify-end bg-[#303030]">
        <div className="flex h-full w-[24px] items-center justify-center bg-[#383635]">
          <Ic className="text-[#d0d0d0]">
            <path d="M2.800 3.200h6.500v5.600H2.800zM7 3.200v5.600" />
          </Ic>
        </div>
      </div>
      <div className="flex w-[195px] items-center bg-[#37100f] text-[#ddc9c8]">
        <Ic className="ml-[47.500px]">
          <path d="M3.800 7L6 4.800 8.200 7" />
        </Ic>
        <Ic className="ml-[4px]">
          <path d="M2.500 8.500a2 2 0 0 1 .5-3.800 2.500 2.500 0 0 1 4.800-.2A2 2 0 0 1 8 8.500z" fill="#e6dcd8" stroke="none" />
          <circle cx="7.800" cy="7.500" r="2.200" fill="#e3b341" stroke="none" />
        </Ic>
        <Ic className="ml-[3.500px] text-[#a77f9d]">
          <path d="M5 2.500h2v4.500H5zM3.700 6c0 3.200 4.600 3.200 4.600 0M6 8.500v2" />
        </Ic>
        <div className="ml-[6.500px] w-[13px] shrink-0 text-center text-[6px]">
          <div>ENG</div>
          <div>INTL</div>
        </div>
        <Ic className="ml-[6px]">
          <path d="M2 5a5.600 5.600 0 0 1 8 0L6 9.500z" fill="#9c7f7e" stroke="none" />
          <path d="M2 5a5.600 5.600 0 0 1 8 0" />
        </Ic>
        <Ic>
          <path d="M2 4.800h1.500L6 3v6L3.500 7.200H2zM7.300 4.500a2 2 0 0 1 0 3M8.700 3.500a4 4 0 0 1 0 5" strokeWidth=".8" />
        </Ic>
        <div className="ml-[1.500px] w-[34px] shrink-0 text-right text-[5.900px]">
          <div>10:22</div>
          <div>01.09.2023</div>
        </div>
        <Ic className="ml-[1.500px] text-[#ece4e3]">
          <path d="M3.200 3h5v5.800h-5zM3.200 8.800v1.500" fill="currentColor" />
          <path d="M5 5.500h3M5 7h3" stroke="#37100f" strokeWidth=".6" />
          <path d="M8 2.500l1.500-1" />
        </Ic>
      </div>
    </div>
  );
}

export default function App() {
  return (
    <div className="flex h-[720px] w-[1280px] justify-center overflow-hidden bg-black font-['Open_Sans','Noto_Sans',sans-serif] whitespace-nowrap">
      <div className="relative flex w-[1078px] flex-col">
        <TitleBar />
        <MenuBar />
        <MainToolbar />
        <div className="flex h-[643px] shrink-0">
          <LeftColumn />
          <div className="flex min-w-0 grow flex-col">
            <div className="flex h-[378px] shrink-0">
              <Viewer />
              <Inspector />
            </div>
            <TimelineToolbar />
            <Timeline />
          </div>
        </div>
        <PageBar />
        <Taskbar />
        <div className="absolute top-[574px] left-[205px] flex h-[88px] w-[668px] items-center justify-center rounded-[2px] border border-[#2c8a78] bg-white text-center font-['Liberation_Sans'] text-[35.850px] leading-[40px] font-bold whitespace-normal text-[#2d3738]">
          Just change the font in ALL project texts to yours!
        </div>
        <svg viewBox="0 0 9 13" className="absolute top-[272px] left-[962px] h-[12px] w-[8px]" fill="#fff" stroke="#222" strokeWidth=".5">
          <path d="M1 .5v10l2.300-2.200L5 12.300l1.800-.8L5.200 7.700h3.200z" />
        </svg>
      </div>
    </div>
  );
}
